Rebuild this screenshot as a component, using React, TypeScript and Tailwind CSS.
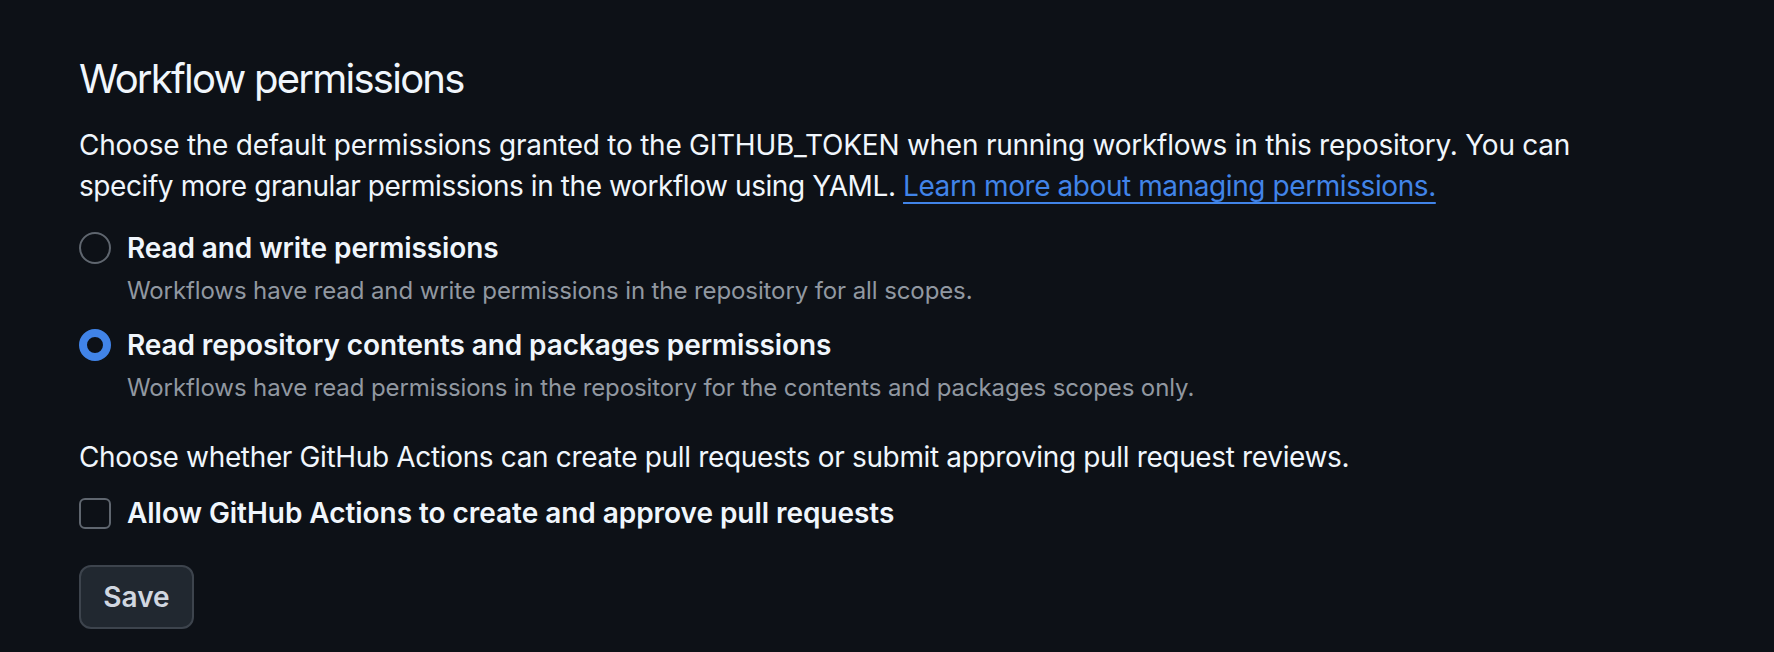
import React from "react";

const font = { fontFamily: 'Inter, "Noto Sans", "Liberation Sans", sans-serif' };

function Radio({ checked }: { checked?: boolean }) {
  return checked ? (
    <span className="mt-[4px] box-border block h-[32px] w-[32px] shrink-0 rounded-full border-[8px] border-[#4184e8] bg-[#0d1117]" />
  ) : (
    <span className="mt-[4px] box-border block h-[32px] w-[32px] shrink-0 rounded-full border-[2px] border-[#5f666f] bg-[#0d1117]" />
  );
}

function RadioRow({ label, desc, checked }: { label: string; desc: string; checked?: boolean }) {
  return (
    <div className="flex gap-[16px]">
      <Radio checked={checked} />
      <div className="flex flex-col">
        <div className="text-[28px] font-semibold leading-[40px] tracking-[-0.1px] text-[#f0f6fc]">{label}</div>
        <div className="mt-[5px] text-[24px] leading-[36px] tracking-[-0.1px] text-[#9198a1]">{desc}</div>
      </div>
    </div>
  );
}

export default function App() {
  return (
    <div className="min-h-screen w-full bg-[#0d1117] pl-[79px] pt-[47px] antialiased" style={font}>
      <h2 className="text-[40px] font-normal leading-[63px] tracking-[-1.75px] text-[#f0f6fc]">Workflow permissions</h2>
      <p className="mt-[15px] text-[28px] leading-[41px] text-[#f0f6fc]">
        <span className="tracking-[-0.24px]">
          Choose the default permissions granted to the GITHUB_TOKEN when running workflows in this repository. You can
        </span>
        <br />
        <span className="tracking-[-0.42px]">
          specify more granular permissions in the workflow using YAML.{" "}
          <a href="#" className="text-[#4184e8] underline decoration-[2px] underline-offset-[6px]">
            Learn more about managing permissions.
          </a>
        </span>
      </p>
      <div className="mt-[21px] flex flex-col gap-[16px]">
        <RadioRow
          label="Read and write permissions"
          desc="Workflows have read and write permissions in the repository for all scopes."
        />
        <RadioRow
          checked
          label="Read repository contents and packages permissions"
          desc="Workflows have read permissions in the repository for the contents and packages scopes only."
        />
      </div>
      <p className="mt-[31px] text-[28px] leading-[40px] tracking-[-0.35px] text-[#f0f6fc]">
        Choose whether GitHub Actions can create pull requests or submit approving pull request reviews.
      </p>
      <div className="mt-[16px] flex gap-[16px]">
        <span className="mt-[5px] box-border block h-[31px] w-[32px] shrink-0 rounded-[6px] border-[2px] border-[#5f666f] bg-[#0d1117]" />
        <span className="text-[28px] font-semibold leading-[40px] tracking-[-0.05px] text-[#f0f6fc]">
          Allow GitHub Actions to create and approve pull requests
        </span>
      </div>
      <button
        type="button"
        className="mt-[32px] box-border flex h-[64px] w-[115px] items-center justify-center rounded-[12px] border-[2px] border-[#3d444d] bg-[#212830] text-[28px] font-semibold text-[#d1d7e0]"
      >
        Save
      </button>
    </div>
  );
}
